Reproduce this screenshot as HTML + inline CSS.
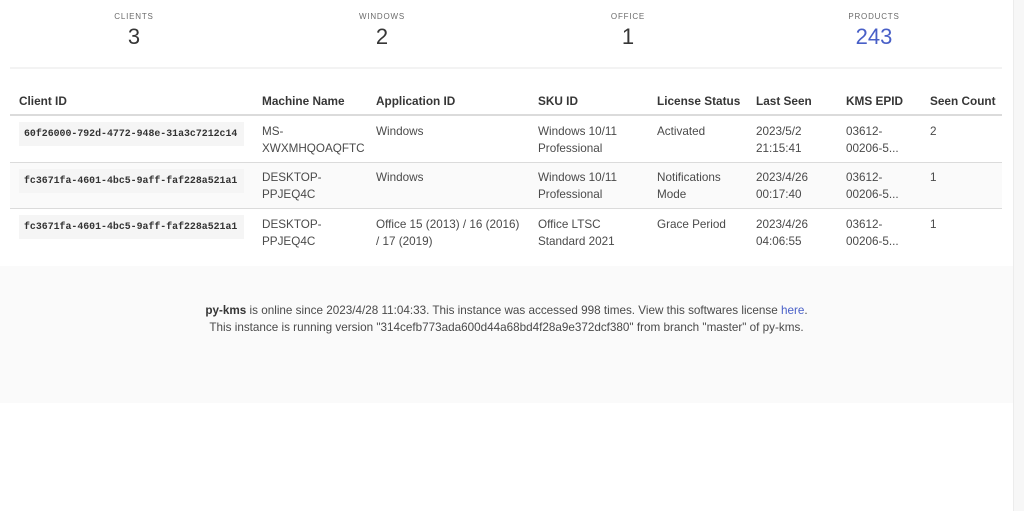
<!DOCTYPE html>
<html><head><meta charset="utf-8"><style>
*{margin:0;padding:0;box-sizing:border-box}
body{width:1024px;height:511px;overflow:hidden;background:#fff;font-family:"Liberation Sans",sans-serif;color:#4a4a4a;position:relative}
.sb{position:absolute;left:1013px;top:0;width:11px;height:511px;background:#f7f7f7;border-left:1px solid #ececec}
.stats{position:absolute;left:10px;top:0;width:992px;height:69px;border-bottom:2px solid #f3f3f3}
.st{position:absolute;top:12px;width:248px;text-align:center}
.st .l{font-size:8px;letter-spacing:.8px;color:#6b6b6b}
.st .v{font-size:22px;color:#363636;margin-top:3px}
.t{position:absolute;font-size:11.7px;line-height:17px;color:#4a4a4a;white-space:nowrap}
.h{position:absolute;top:94px;font-size:11.8px;font-weight:bold;color:#363636;white-space:nowrap}
.row{position:absolute;left:10px;width:992px;border-bottom:1px solid #dbdbdb}
.code{position:absolute;left:19px;width:225px;height:24px;background:#f5f5f5;font-family:"Liberation Mono",monospace;font-weight:bold;font-size:9.9px;color:#333;line-height:24px;padding-left:5px;white-space:nowrap;overflow:hidden}
.foot{position:absolute;left:0;top:266px;width:1013px;height:137px;background:#fafafa;text-align:center;font-size:11.7px;line-height:17px;color:#4a4a4a;padding-top:36px;white-space:nowrap}
.foot a{color:#485fc7;text-decoration:none}
</style></head><body>
<div class="stats">
<div class="st" style="left:0"><div class="l">CLIENTS</div><div class="v">3</div></div>
<div class="st" style="left:248px"><div class="l">WINDOWS</div><div class="v">2</div></div>
<div class="st" style="left:494px"><div class="l">OFFICE</div><div class="v">1</div></div>
<div class="st" style="left:740px"><div class="l">PRODUCTS</div><div class="v" style="color:#485fc7">243</div></div>
</div>
<div class="h" style="left:19px">Client ID</div>
<div class="h" style="left:262px">Machine Name</div>
<div class="h" style="left:376px">Application ID</div>
<div class="h" style="left:538px">SKU ID</div>
<div class="h" style="left:657px">License Status</div>
<div class="h" style="left:756px">Last Seen</div>
<div class="h" style="left:846px">KMS EPID</div>
<div class="h" style="left:930px">Seen Count</div>
<div class="row" style="top:114px;height:2px;background:#dbdbdb;border:0"></div>
<div class="row" style="top:116px;height:47px"></div>
<div class="row" style="top:163px;height:46px;background:#fafafa"></div>
<div class="row" style="top:209px;height:47px;border:0"></div>

<div class="code" style="top:122px">60f26000-792d-4772-948e-31a3c7212c14</div>
<div class="t" style="left:262px;top:123px">MS-<br>XWXMHQOAQFTC</div>
<div class="t" style="left:376px;top:123px">Windows</div>
<div class="t" style="left:538px;top:123px">Windows 10/11<br>Professional</div>
<div class="t" style="left:657px;top:123px">Activated</div>
<div class="t" style="left:756px;top:123px">2023/5/2<br>21:15:41</div>
<div class="t" style="left:846px;top:123px">03612-<br>00206-5...</div>
<div class="t" style="left:930px;top:123px">2</div>

<div class="code" style="top:169px">fc3671fa-4601-4bc5-9aff-faf228a521a1</div>
<div class="t" style="left:262px;top:169px">DESKTOP-<br>PPJEQ4C</div>
<div class="t" style="left:376px;top:169px">Windows</div>
<div class="t" style="left:538px;top:169px">Windows 10/11<br>Professional</div>
<div class="t" style="left:657px;top:169px">Notifications<br>Mode</div>
<div class="t" style="left:756px;top:169px">2023/4/26<br>00:17:40</div>
<div class="t" style="left:846px;top:169px">03612-<br>00206-5...</div>
<div class="t" style="left:930px;top:169px">1</div>

<div class="code" style="top:215px">fc3671fa-4601-4bc5-9aff-faf228a521a1</div>
<div class="t" style="left:262px;top:216px">DESKTOP-<br>PPJEQ4C</div>
<div class="t" style="left:376px;top:216px">Office 15 (2013) / 16 (2016)<br>/ 17 (2019)</div>
<div class="t" style="left:538px;top:216px">Office LTSC<br>Standard 2021</div>
<div class="t" style="left:657px;top:216px">Grace Period</div>
<div class="t" style="left:756px;top:216px">2023/4/26<br>04:06:55</div>
<div class="t" style="left:846px;top:216px">03612-<br>00206-5...</div>
<div class="t" style="left:930px;top:216px">1</div>

<div class="foot"><b style="color:#363636">py-kms</b> is online since 2023/4/28 11:04:33. This instance was accessed 998 times. View this softwares license <a>here</a>.<br>This instance is running version "314cefb773ada600d44a68bd4f28a9e372dcf380" from branch "master" of py-kms.</div>
<div class="sb"></div>
</body></html>
